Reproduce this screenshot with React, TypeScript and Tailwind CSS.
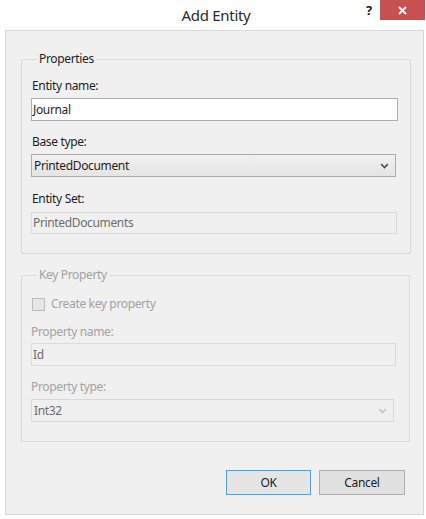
import React from "react";

const font = { fontFamily: '"Noto Sans", "Open Sans", sans-serif' };

function Chevron({ disabled }: { disabled?: boolean }) {
    return (
        <svg width="9" height="6" viewBox="0 0 9 6" className="shrink-0">
            <path
                d="M1.2 1.2 L4.5 4.5 L7.8 1.2"
                fill="none"
                stroke={disabled ? "#c4c4c4" : "#505050"}
                strokeWidth="1.7"
            />
        </svg>
    );
}

export default function App() {
    return (
        <div
            className="w-[426px] h-[519px] bg-white text-[12px] leading-[16px] tracking-[-0.35px] text-[#1e1e1e] select-none"
            style={font}
        >
            {/* title bar */}
            <div className="relative h-[30px] flex items-center justify-center">
                <span className="text-[15px] leading-[20px] tracking-[-0.3px] text-[#2b2b2b] ml-[6px] -mt-[1px]">Add Entity</span>
                <span className="absolute left-[366px] top-[2px] text-[13px] font-bold text-[#202020]">?</span>
                <div className="absolute left-[380px] top-0 w-[45px] h-[20px] bg-[#c75050] flex items-center justify-center">
                    <svg width="9" height="9" viewBox="0 0 9 9">
                        <path d="M1 1 L8 8 M8 1 L1 8" stroke="#ffffff" strokeWidth="1.8" />
                    </svg>
                </div>
            </div>

            {/* client area */}
            <div className="ml-[5px] w-[419px] h-[485px] border border-[#d7d7d7] bg-[#f0f0f0] flex flex-col">
                <fieldset className="ml-[15px] mt-[20px] w-[390px] border border-[#dcdcdc] pl-[9px] pb-[19px]">
                    <legend className="ml-[6px] px-[2px]">Properties</legend>
                    <div className="mt-[11px] pl-[1px]">Entity name:</div>
                    <div className="mt-[4px] w-[367px] h-[23px] border border-[#abadb3] bg-white flex items-center px-[1px]">
                        Journal
                    </div>
                    <div className="mt-[13px] pl-[1px]">Base type:</div>
                    <div className="mt-[4px] w-[365px] h-[23px] border border-[#acacac] bg-gradient-to-b from-[#f0f0f0] to-[#e5e5e5] flex items-center justify-between pl-[2px] pr-[6px]">
                        <span>PrintedDocument</span>
                        <Chevron />
                    </div>
                    <div className="mt-[14px] pl-[1px]">Entity Set:</div>
                    <div className="mt-[5px] w-[366px] h-[22px] border border-[#dadada] bg-[#f0f0f0] flex items-center px-[1px] text-[#6d6d6d]">
                        PrintedDocuments
                    </div>
                </fieldset>

                <fieldset className="ml-[15px] mt-[13px] w-[389px] border border-[#dcdcdc] pl-[9px] pb-[19px] text-[#a2a2a2]">
                    <legend className="ml-[6px] px-[2px]">Key Property</legend>
                    <div className="mt-[13px] flex items-center gap-[6px] pl-[1px]">
                        <div className="w-[13px] h-[13px] border border-[#bcbcbc] bg-[#e6e6e6]" />
                        <span>Create key property</span>
                    </div>
                    <div className="mt-[12px]">Property name:</div>
                    <div className="mt-[3px] w-[365px] h-[23px] border border-[#dadada] bg-[#f0f0f0] flex items-center px-[1px] text-[#6d6d6d]">
                        Id
                    </div>
                    <div className="mt-[13px]">Property type:</div>
                    <div className="mt-[4px] w-[363px] h-[23px] border border-[#d9d9d9] bg-[#efefef] flex items-center justify-between pl-[2px] pr-[6px] text-[#6d6d6d]">
                        <span>Int32</span>
                        <Chevron disabled />
                    </div>
                </fieldset>

                <div className="mt-[28px] flex justify-end gap-[8px] pr-[18px]">
                    <button className="w-[85px] h-[25px] border border-[#5b9ddb] bg-[#e5e5e5] text-[#1e1e1e]">OK</button>
                    <button className="w-[86px] h-[25px] border border-[#adadad] bg-[#e1e1e1] text-[#1e1e1e]">Cancel</button>
                </div>
            </div>
        </div>
    );
}
